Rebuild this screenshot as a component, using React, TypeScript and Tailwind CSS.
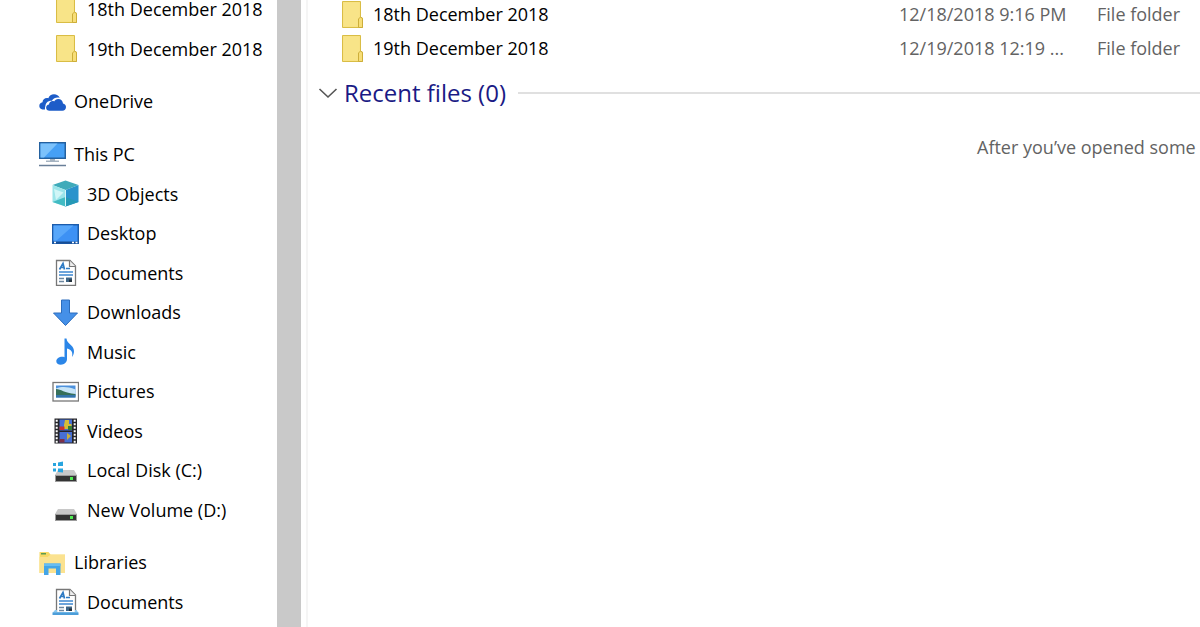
import React, { useState } from 'react';

const FolderIcon = () => (
  <svg className="size-[27px] shrink-0" viewBox="0 0 27 27" aria-hidden="true">
    <path d="M4.500.5h18v15.500l2 1v9.500h-20z" fill="#f8e080" stroke="#d9bd45" />
    <path d="M5.500 1.500h16v24h-16z" fill="#f8e488" />
    <path d="M20.500 26.500v-8.500l2-2 2 1.500v9z" fill="#f7de78" stroke="#cdae3a" />
  </svg>
);

const OneDriveIcon = () => (
  <svg className="size-[27px] shrink-0" viewBox="0 0 27 27" aria-hidden="true">
    <path
      d="M6 21.500H3.500C1.500 21 .3 19.700.3 17.900c0-1.900 1.300-3.200 3.200-3.600.1-2.400 2-4.200 4.500-4.200.5 0 .9 0 1.300.2C10.300 7.800 12.300 6.300 15 6.300c2.600 0 4.700 1.300 5.700 3.500-3.300-.8-6.100.3-7.800 3-3.700-.3-6.300 1.900-6.500 5.300-.4 1.200-.6 2.300-.4 3.400z"
      fill="#1d5cc8"
    />
    <path
      d="M10.500 22.800c-2 0-3.400-1.300-3.400-3.100 0-1.700 1.200-2.900 2.900-3.100.1-2.100 1.800-3.500 3.800-3.500.5 0 1 .1 1.300.3.900-1.600 2.300-2.500 4.100-2.500 2.700 0 4.700 2 4.800 4.700 1.800.3 3 1.700 3 3.500 0 2.100-1.500 3.700-3.600 3.700z"
      fill="#1d5cc8"
    />
  </svg>
);

const ComputerIcon = () => (
  <svg className="size-[27px] shrink-0" viewBox="0 0 27 27" aria-hidden="true">
    <rect x=".75" y="1.750" width="25.500" height="15.500" fill="#46a0f5" stroke="#24619f" strokeWidth="1.500" />
    <path d="M1.500 2.500h17L5 16.500H1.500z" fill="#7cc2fb" />
    <path d="M11 18h5v1.500h4V21H7v-1.500h4z" fill="#a5b3c1" />
    <path d="M0 24.500h27" stroke="#697f98" strokeWidth="1.500" />
  </svg>
);

const ObjectsIcon = () => (
  <svg className="size-[27px] shrink-0" viewBox="0 0 27 27" aria-hidden="true">
    <path d="M.5 5 13.500.5l13 4.500-13 5z" fill="#3fabba" />
    <path d="M.5 5l13 5v16.500L.5 22z" fill="#9ce5ea" />
    <path d="M26.500 5l-13 5v16.500l13-4.500z" fill="#2b93cc" />
    <path d="M2 9l9.500 3.500L4 20z" fill="#d0f6f7" />
    <path d="M.5 22l13-5v9.500z" fill="#42bbc3" />
    <path d="M13.500 17l13 5-13 4.500z" fill="#2599b5" />
    <path d="M13.500 10v16" stroke="#d4f4f7" />
  </svg>
);

const DesktopIcon = () => (
  <svg className="size-[27px] shrink-0" viewBox="0 0 27 27" aria-hidden="true">
    <rect x=".75" y="4.750" width="25.500" height="18.500" fill="#3d91f4" stroke="#1c5cab" strokeWidth="1.500" />
    <path d="M1.500 5.500h20l-17 15h-3z" fill="#58a7fa" />
    <path d="M1 21.500h25v2H1z" fill="#174d94" />
    <path d="M2 22.500h2M20 22.500h2M23.500 22.500h2" stroke="#fff" strokeWidth="1.500" />
  </svg>
);

const PageShape = () => (
  <>
    <path d="M4.500 1.500h13.500l5.500 5.500v19.500h-19z" fill="#fff" stroke="#777" strokeWidth="1.300" />
    <path d="M17.500 1.500v6h6" fill="#eee" stroke="#777" strokeWidth="1.200" />
    <path d="M7.500 10.500 11 4.500l1.500 6M9 8.500h3M14 9.500h4" fill="none" stroke="#2f7bc4" strokeWidth="1.700" />
    <path d="M7 13h14M7 16h14" stroke="#3c86cf" strokeWidth="1.400" />
    <path d="M7 19.500h5M7 22.500h5" stroke="#6c87a0" strokeWidth="1.400" />
    <path d="M14 18.500h6v4.500h-6z" fill="#3f6687" />
    <path d="M17 20.500h3v2.500h-3z" fill="#24313c" />
  </>
);

const DocumentIcon = () => (
  <svg className="size-[27px] shrink-0" viewBox="0 0 27 27" aria-hidden="true">
    <PageShape />
  </svg>
);

const DownloadIcon = () => (
  <svg className="size-[27px] shrink-0" viewBox="0 0 27 27" aria-hidden="true">
    <path d="M9.500 1h8v13h8L13.500 26.500 1.500 14h8z" fill="#4590e8" stroke="#2c6dbd" />
  </svg>
);

const MusicIcon = () => (
  <svg className="size-[27px] shrink-0" viewBox="0 0 27 27" aria-hidden="true">
    <path
      d="M12.500.5h2c.3 3.300 2.300 4.600 4.800 7 3.600 3.500 3.400 8 .7 11.500 1-4.300-.3-7.400-5-8.400v10.400c0 3.300-2.700 5.700-6.200 5.700-2.700 0-4.500-1.400-4.500-3.400 0-2.500 2.700-4.500 6-4.500.8 0 1.500.1 2.200.4z"
      fill="#2b86e8"
    />
  </svg>
);

const PictureIcon = () => (
  <svg className="size-[27px] shrink-0" viewBox="0 0 27 27" aria-hidden="true">
    <rect x="1" y="4.500" width="25.500" height="18.500" fill="#fff" stroke="#777" strokeWidth="1.300" />
    <path d="M4 7.500h19.500v12H4z" fill="#4d91dc" />
    <path d="M4 10.500c6-2 11-2 19.500 1v4.500H4z" fill="#c7e4f7" />
    <path d="M4 11c5 0 8 4 19.500 5v1.500H4z" fill="#37705a" />
    <path d="M4 17h19.500v2.500H4z" fill="#3474a9" />
  </svg>
);

const VideoIcon = () => (
  <svg className="size-[27px] shrink-0" viewBox="0 0 27 27" aria-hidden="true">
    <path d="M2.500 1.500H25v25H2.500z" fill="#25252a" />
    <path d="M7.500 2.500h12.500v11H7.500zM7.500 15h12.500v10.500H7.500z" fill="#476fd4" />
    <path d="M13 3h4v4h2.500v5H12V8z" fill="#d5bd37" />
    <path d="M7.500 9.500h5V13h-5z" fill="#c73330" />
    <path d="M16 9h4v4h-4z" fill="#367c36" />
    <path d="M15 16l4 3-4 4z" fill="#c8ae3a" />
    <path d="M7.500 22h5v3.500h-5z" fill="#7d3149" />
    <path d="M4.700 2.800v23M22.700 2.800v23" stroke="#fff" strokeWidth="2" strokeDasharray="2 1.500" />
  </svg>
);

const DriveShape = () => (
  <>
    <path d="M6 13h16l3 5H3z" fill="#c8c8c8" />
    <path d="M3 18h22v7H3z" fill="#9c9c9c" />
    <path d="M4 19h20v5H4z" fill="#343434" />
    <path d="M18 20h3v3h-3z" fill="#4dec50" />
  </>
);

const LocalDiskIcon = () => (
  <svg className="size-[27px] shrink-0" viewBox="0 0 27 27" aria-hidden="true">
    <DriveShape />
    <path d="M1 6h3v3H1zM6 5.500l5-1v4.500H6zM1 11.500h3v3H1zM6 11.500h5v4l-5-.5z" fill="#28a5df" />
  </svg>
);

const DriveIcon = () => (
  <svg className="size-[27px] shrink-0" viewBox="0 0 27 27" aria-hidden="true">
    <DriveShape />
  </svg>
);

const LibrariesIcon = () => (
  <svg className="size-[27px] shrink-0" viewBox="0 0 27 27" aria-hidden="true">
    <path d="M.5 3h9l2 2.500h14.500V24H.5z" fill="#f7d967" />
    <path d="M2 4h5v1.500H2z" fill="#5d9b51" />
    <path d="M.5 8h8l2.500-2h15v18H.5z" fill="#fbe290" />
    <path d="M5 14.500h16.500V26H17v-6.500H9.500V26H5z" fill="#44a5e7" />
    <path d="M5 14.500h16.500V17H5z" fill="#67bdf2" />
  </svg>
);

const LibraryDocumentIcon = () => (
  <svg className="size-[27px] shrink-0" viewBox="0 0 27 27" aria-hidden="true">
    <PageShape />
    <path d="M3 22h2v2h18v-2h1.500l2 3H.5z" fill="#8bc8ef" />
    <path d="M.5 24.500h26V27H.5z" fill="#4c9ed9" />
  </svg>
);

const treeGroups = [
  [
    { name: '18th December 2018', icon: FolderIcon, nested: true },
    { name: '19th December 2018', icon: FolderIcon, nested: true }
  ],
  [{ name: 'OneDrive', icon: OneDriveIcon, nested: false }],
  [
    { name: 'This PC', icon: ComputerIcon, nested: false },
    { name: '3D Objects', icon: ObjectsIcon, nested: true },
    { name: 'Desktop', icon: DesktopIcon, nested: true },
    { name: 'Documents', icon: DocumentIcon, nested: true },
    { name: 'Downloads', icon: DownloadIcon, nested: true },
    { name: 'Music', icon: MusicIcon, nested: true },
    { name: 'Pictures', icon: PictureIcon, nested: true },
    { name: 'Videos', icon: VideoIcon, nested: true },
    { name: 'Local Disk (C:)', icon: LocalDiskIcon, nested: true },
    { name: 'New Volume (D:)', icon: DriveIcon, nested: true }
  ],
  [
    { name: 'Libraries', icon: LibrariesIcon, nested: false },
    { name: 'Documents', icon: LibraryDocumentIcon, nested: true }
  ]
];

const folders = [
  { name: '18th December 2018', modified: '12/18/2018 9:16 PM', type: 'File folder' },
  { name: '19th December 2018', modified: '12/19/2018 12:19 ...', type: 'File folder' }
];

const App = () => {
  const [showRecent, setShowRecent] = useState(true);

  return (
    <div className="flex h-screen overflow-hidden bg-white font-['Open_Sans','Noto_Sans',sans-serif] text-[18px] leading-5 text-black">
      {/* Navigation tree, scrolled part of the way down */}
      <nav className="w-[277px] shrink-0 overflow-hidden">
        <div className="-mt-[11px] flex flex-col gap-[13px]">
          {treeGroups.map((group, index) => (
            <ul key={index}>
              {group.map(({ name, icon: Icon, nested }) => (
                <li key={name} className="h-10 even:h-[39px]">
                  <a
                    href="#"
                    className={`flex h-full items-center gap-2 whitespace-nowrap ${nested ? 'pl-[52px]' : 'pl-[39px]'}`}
                  >
                    <Icon />
                    {name}
                  </a>
                </li>
              ))}
            </ul>
          ))}
        </div>
      </nav>

      {/* Scrollbar thumb */}
      <div className="w-6 shrink-0 bg-[#c9c9c9]" />

      <main className="ml-[5px] min-w-0 flex-1 overflow-hidden border-l-2 border-[#f5f5f5]">
        <table className="-mt-[3px] w-full table-fixed border-collapse text-left">
          <tbody>
            {folders.map((folder) => (
              <tr key={folder.name} className="h-[34px]">
                <td className="p-0 pl-[30px]">
                  <a href="#" className="flex items-center gap-2">
                    <FolderIcon />
                    {folder.name}
                  </a>
                </td>
                <td className="w-[198px] p-0 whitespace-nowrap text-[#636363]">{folder.modified}</td>
                <td className="w-[103px] p-0 whitespace-nowrap text-[#636363]">{folder.type}</td>
              </tr>
            ))}
          </tbody>
        </table>

        <div className="mt-3 flex items-center gap-3 pl-[10px]">
          <button
            type="button"
            aria-expanded={showRecent}
            onClick={() => setShowRecent(!showRecent)}
            className="flex items-center gap-1.5 text-[24px] leading-8 whitespace-nowrap text-[#1a1a85]"
          >
            <svg className="size-5" viewBox="0 0 20 20" fill="none" aria-hidden="true">
              <path d="M1.500 6l8.500 8 8.500-8" stroke="#555" strokeWidth="1.600" />
            </svg>
            Recent files (0)
          </button>
          <div className="h-0.5 flex-1 bg-[#e0e0e0]" />
        </div>

        {showRecent && (
          <p className="mt-7 ml-auto w-[223px] whitespace-nowrap text-[#636363]">
            After you’ve opened some
          </p>
        )}
      </main>
    </div>
  );
};

export default App;
